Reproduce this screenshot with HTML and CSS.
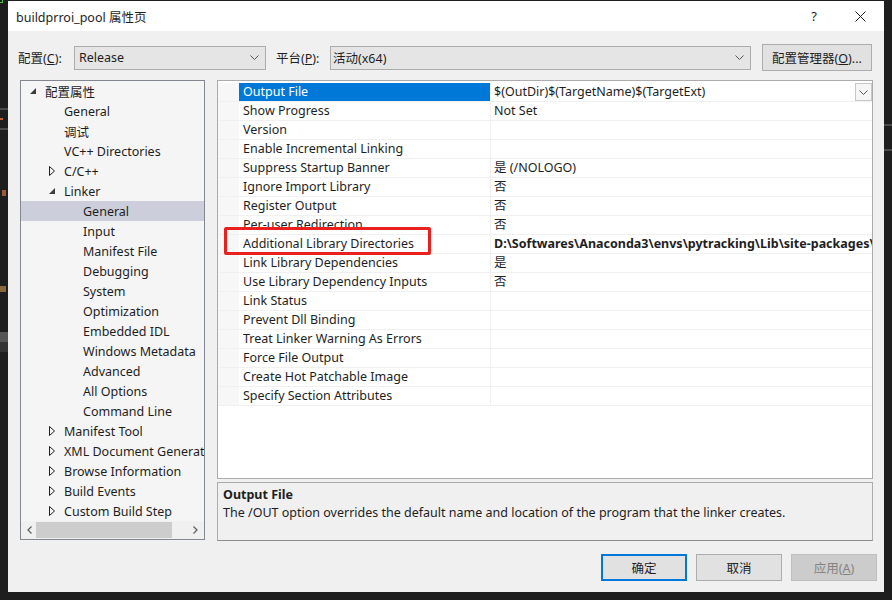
FILE: index.html
```html
<!DOCTYPE html>
<html lang="zh-CN">

<head>
    <meta charset="UTF-8">
    <title>buildprroi_pool 属性页</title>
    <link rel="stylesheet" href="styles.css">
</head>

<body>
    <div class="screen">
        <!-- editor behind the dialog -->
        <div class="edge edge-left">
            <i class="mark green"></i>
            <i class="mark bar b1"></i>
            <i class="mark orange o1"></i>
            <i class="mark bar b2"></i>
            <i class="mark orange o2"></i>
            <i class="mark orange o3"></i>
            <i class="mark block"></i>
            <i class="mark block dark"></i>
        </div>

        <div class="dialog">
            <div class="titlebar">
                <span class="title">buildprroi_pool 属性页</span>
                <span class="help">?</span>
                <svg class="close" width="11" height="11" viewBox="0 0 11 11">
                    <path d="M0.5 0.5 L10.5 10.5 M10.5 0.5 L0.5 10.5" stroke="#1e1e1e" stroke-width="1" fill="none"/>
                </svg>
            </div>

            <div class="client">
                <div class="config-row">
                    <label class="lbl lbl-config">配置(<u>C</u>):</label>
                    <div class="combo combo-config">
                        <span>Release</span>
                        <svg width="9" height="5" viewBox="0 0 9 5"><path d="M0.5 0.5 L4.5 4.5 L8.5 0.5" stroke="#555" fill="none"/></svg>
                    </div>
                    <label class="lbl lbl-platform">平台(<u>P</u>):</label>
                    <div class="combo combo-platform">
                        <span>活动(x64)</span>
                        <svg width="9" height="5" viewBox="0 0 9 5"><path d="M0.5 0.5 L4.5 4.5 L8.5 0.5" stroke="#555" fill="none"/></svg>
                    </div>
                    <button class="btn btn-manager">配置管理器(<u>O</u>)...</button>
                </div>

                <div class="panels">
                    <div class="tree">
                        <div class="nodes">
                            <div class="node lvl0"><span class="tw"><svg width="6" height="6"><path d="M6 0 L6 6 L0 6 Z" fill="#3c3c3c"/></svg></span>配置属性</div>
                            <div class="node lvl1"><span class="tw"></span>General</div>
                            <div class="node lvl1"><span class="tw"></span>调试</div>
                            <div class="node lvl1"><span class="tw"></span>VC++ Directories</div>
                            <div class="node lvl1"><span class="tw"><svg width="6" height="10"><path d="M0.5 0.5 L5.5 5 L0.5 9.5 Z" fill="none" stroke="#1e1e1e"/></svg></span>C/C++</div>
                            <div class="node lvl1"><span class="tw"><svg width="6" height="6"><path d="M6 0 L6 6 L0 6 Z" fill="#3c3c3c"/></svg></span>Linker</div>
                            <div class="node lvl2 selected"><span class="tw"></span>General</div>
                            <div class="node lvl2"><span class="tw"></span>Input</div>
                            <div class="node lvl2"><span class="tw"></span>Manifest File</div>
                            <div class="node lvl2"><span class="tw"></span>Debugging</div>
                            <div class="node lvl2"><span class="tw"></span>System</div>
                            <div class="node lvl2"><span class="tw"></span>Optimization</div>
                            <div class="node lvl2"><span class="tw"></span>Embedded IDL</div>
                            <div class="node lvl2"><span class="tw"></span>Windows Metadata</div>
                            <div class="node lvl2"><span class="tw"></span>Advanced</div>
                            <div class="node lvl2"><span class="tw"></span>All Options</div>
                            <div class="node lvl2"><span class="tw"></span>Command Line</div>
                            <div class="node lvl1"><span class="tw"><svg width="6" height="10"><path d="M0.5 0.5 L5.5 5 L0.5 9.5 Z" fill="none" stroke="#1e1e1e"/></svg></span>Manifest Tool</div>
                            <div class="node lvl1"><span class="tw"><svg width="6" height="10"><path d="M0.5 0.5 L5.5 5 L0.5 9.5 Z" fill="none" stroke="#1e1e1e"/></svg></span>XML Document Generator</div>
                            <div class="node lvl1"><span class="tw"><svg width="6" height="10"><path d="M0.5 0.5 L5.5 5 L0.5 9.5 Z" fill="none" stroke="#1e1e1e"/></svg></span>Browse Information</div>
                            <div class="node lvl1"><span class="tw"><svg width="6" height="10"><path d="M0.5 0.5 L5.5 5 L0.5 9.5 Z" fill="none" stroke="#1e1e1e"/></svg></span>Build Events</div>
                            <div class="node lvl1"><span class="tw"><svg width="6" height="10"><path d="M0.5 0.5 L5.5 5 L0.5 9.5 Z" fill="none" stroke="#1e1e1e"/></svg></span>Custom Build Step</div>
                        </div>
                        <div class="hscroll">
                            <svg class="arrow" width="5" height="8" viewBox="0 0 5 8"><path d="M4.5 0.5 L1 4 L4.5 7.5" stroke="#606060" stroke-width="1.3" fill="none"/></svg>
                            <div class="track"><div class="thumb"></div></div>
                            <svg class="arrow" width="5" height="8" viewBox="0 0 5 8"><path d="M0.5 0.5 L4 4 L0.5 7.5" stroke="#606060" stroke-width="1.3" fill="none"/></svg>
                        </div>
                    </div>

                    <div class="right">
                        <div class="grid">
                            <div class="prow">
                                <div class="gut"></div>
                                <div class="pname active">Output File</div>
                                <div class="pval">$(OutDir)$(TargetName)$(TargetExt)
                                    <span class="dd"><svg width="9" height="5" viewBox="0 0 9 5"><path d="M0.5 0.5 L4.5 4.5 L8.5 0.5" stroke="#555" fill="none"/></svg></span>
                                </div>
                            </div>
                            <div class="prow"><div class="gut"></div><div class="pname">Show Progress</div><div class="pval">Not Set</div></div>
                            <div class="prow"><div class="gut"></div><div class="pname">Version</div><div class="pval"></div></div>
                            <div class="prow"><div class="gut"></div><div class="pname">Enable Incremental Linking</div><div class="pval"></div></div>
                            <div class="prow"><div class="gut"></div><div class="pname">Suppress Startup Banner</div><div class="pval">是 (/NOLOGO)</div></div>
                            <div class="prow"><div class="gut"></div><div class="pname">Ignore Import Library</div><div class="pval">否</div></div>
                            <div class="prow"><div class="gut"></div><div class="pname">Register Output</div><div class="pval">否</div></div>
                            <div class="prow"><div class="gut"></div><div class="pname">Per-user Redirection</div><div class="pval">否</div></div>
                            <div class="prow"><div class="gut"></div><div class="pname">Additional Library Directories</div><div class="pval bold">D:\Softwares\Anaconda3\envs\pytracking\Lib\site-packages\</div></div>
                            <div class="prow"><div class="gut"></div><div class="pname">Link Library Dependencies</div><div class="pval">是</div></div>
                            <div class="prow"><div class="gut"></div><div class="pname">Use Library Dependency Inputs</div><div class="pval">否</div></div>
                            <div class="prow"><div class="gut"></div><div class="pname">Link Status</div><div class="pval"></div></div>
                            <div class="prow"><div class="gut"></div><div class="pname">Prevent Dll Binding</div><div class="pval"></div></div>
                            <div class="prow"><div class="gut"></div><div class="pname">Treat Linker Warning As Errors</div><div class="pval"></div></div>
                            <div class="prow"><div class="gut"></div><div class="pname">Force File Output</div><div class="pval"></div></div>
                            <div class="prow"><div class="gut"></div><div class="pname">Create Hot Patchable Image</div><div class="pval"></div></div>
                            <div class="prow"><div class="gut"></div><div class="pname">Specify Section Attributes</div><div class="pval"></div></div>

                            <!-- annotation drawn over the grid -->
                            <div class="redbox"></div>
                        </div>
                        <div class="desc">
                            <div class="desc-title">Output File</div>
                            <div class="desc-text">The /OUT option overrides the default name and location of the program that the linker creates.</div>
                        </div>
                    </div>
                </div>

                <div class="buttons">
                    <button class="btn btn-ok">确定</button>
                    <button class="btn btn-cancel">取消</button>
                    <button class="btn btn-apply" disabled>应用(<u>A</u>)</button>
                </div>
            </div>
        </div>

        <div class="edge edge-right">
            <i class="mark bar r1"></i>
            <i class="mark bar r2"></i>
        </div>
    </div>
</body>

</html>
```

FILE: styles.css
```css
* {
    margin: 0;
    padding: 0;
    box-sizing: border-box;
}

body {
    background: #1e1e1e;
    font-family: "Noto Sans", "Noto Sans CJK SC", sans-serif;
    font-size: 12.5px;
    color: #1e1e1e;
    overflow: hidden;
}

.screen {
    display: flex;
    height: 600px;
    padding-top: 1px;
}

/* bits of the code editor peeking out */
.edge {
    display: flex;
    flex-direction: column;
    flex: 1;
}

.edge-left {
    width: 8px;
    flex: none;
}

.mark {
    display: block;
    height: 2px;
}

.mark.green { width: 3px; height: 3px; margin-top: -1px; border: 1px solid #4ec94e; border-top: none; border-left: none; }
.mark.bar { background: #4a4a4a; }
.b1 { margin-top: 105px; }
.o1 { margin-top: 8px; width: 3px; background: #c0602a; }
.b2 { margin-top: 8px; }
.o2 { margin-top: 60px; width: 4px; height: 6px; margin-left: 2px; background: #9a5a3a; }
.o3 { margin-top: 90px; width: 6px; height: 6px; background: #8a6a3a; }
.mark.block { margin-top: 40px; height: 10px; background: #555; }
.mark.block.dark { margin-top: 0; height: 10px; background: #333; }
.r1 { margin-top: 123px; }
.r2 { margin-top: 23px; }

.dialog {
    width: 876px;
    height: 591px;
    flex: none;
    display: flex;
    flex-direction: column;
    background: #f0f0f0;
}

.titlebar {
    height: 30px;
    background: #fff;
    display: flex;
    align-items: center;
    padding-left: 8px;
}

.title {
    flex: 1;
}

.help {
    font-size: 13px;
    margin-right: 38px;
}

.close {
    margin-right: 18px;
}

.client {
    flex: 1;
    padding: 13px 7px 0 12px;
}

.config-row {
    display: flex;
    align-items: center;
    height: 27px;
}

.lbl-config { width: 66px; margin-left: -12px; padding-left: 10px; }
.lbl-platform { width: 54px; margin-left: 10px; }

.combo {
    height: 24px;
    background: #e5e5e5;
    border: 1px solid #acacac;
    display: flex;
    align-items: center;
    justify-content: space-between;
    padding: 0 6px 0 4px;
}

.combo-config { width: 192px; }
.combo-platform { width: 421px; padding-left: 2px; }

.btn {
    font-family: inherit;
    font-size: 12.5px;
    color: #1e1e1e;
    background: #e1e1e1;
    border: 1px solid #adadad;
    height: 27px;
}

.btn-manager {
    width: 110px;
    margin-left: 11px;
}

.panels {
    display: flex;
    margin-top: 9px;
    gap: 12px;
}

/* category tree */
.tree {
    width: 185px;
    height: 460px;
    border: 1px solid #828790;
    background: #f5f5f5;
    display: flex;
    flex-direction: column;
}

.nodes {
    height: 440px;
    overflow: hidden;
}

.node {
    height: 20px;
    display: flex;
    align-items: center;
    white-space: nowrap;
}

.lvl0 { padding-left: 7px; }
.lvl1 { padding-left: 26px; }
.lvl2 { padding-left: 45px; }

.node.selected {
    background: #cccedb;
}

.tw {
    width: 17px;
    flex: none;
    display: flex;
    align-items: center;
    padding-left: 2px;
}

.hscroll {
    height: 18px;
    background: #f0f0f0;
    display: flex;
    align-items: center;
    padding: 0 6px;
    gap: 4px;
}

.track {
    flex: 1;
    height: 16px;
    padding-right: 17px;
}

.thumb {
    height: 100%;
    background: #cdcdcd;
}

/* property grid */
.right {
    width: 656px;
    display: flex;
    flex-direction: column;
    gap: 3px;
}

.grid {
    position: relative;
    height: 399px;
    background: #fff;
    border: 1px solid #acacac;
    padding-top: 2px;
}

.prow {
    display: flex;
    height: 19px;
    border-bottom: 1px solid #f0f0f0;
}

.gut {
    width: 21px;
    background: #f7f7f7;
}

.pname {
    width: 252px;
    padding-left: 4px;
    line-height: 18px;
    white-space: nowrap;
    border-right: 1px solid #f0f0f0;
}

.pname.active {
    background: #0078d7;
    color: #fff;
}

.pval {
    flex: 1;
    padding-left: 3px;
    line-height: 18px;
    white-space: nowrap;
    overflow: hidden;
    position: relative;
}

.pval.bold {
    font-weight: bold;
}

.dd {
    position: absolute;
    right: 0;
    top: 0;
    width: 17px;
    height: 18px;
    border: 1px solid #c8c8c8;
    background: #f5f5f5;
    display: flex;
    align-items: center;
    justify-content: center;
}

.redbox {
    position: absolute;
    left: 6px;
    top: 146px;
    width: 207px;
    height: 28px;
    border: 3px solid #e8211f;
    border-radius: 2px;
}

.desc {
    height: 59px;
    border: 1px solid #acacac;
    border-bottom-color: #8c8c8c;
    background: #f0f0f0;
    padding: 3px 5px;
}

.desc-title {
    font-weight: bold;
    line-height: 18px;
}

.desc-text {
    line-height: 18px;
}

.buttons {
    display: flex;
    justify-content: flex-end;
    margin-top: 13px;
    gap: 9px;
}

.btn-ok,
.btn-cancel,
.btn-apply {
    width: 86px;
}

.btn-ok {
    border: 2px solid #0078d7;
}

.btn-apply {
    background: #cccccc;
    border-color: #bfbfbf;
    color: #838383;
}
```
